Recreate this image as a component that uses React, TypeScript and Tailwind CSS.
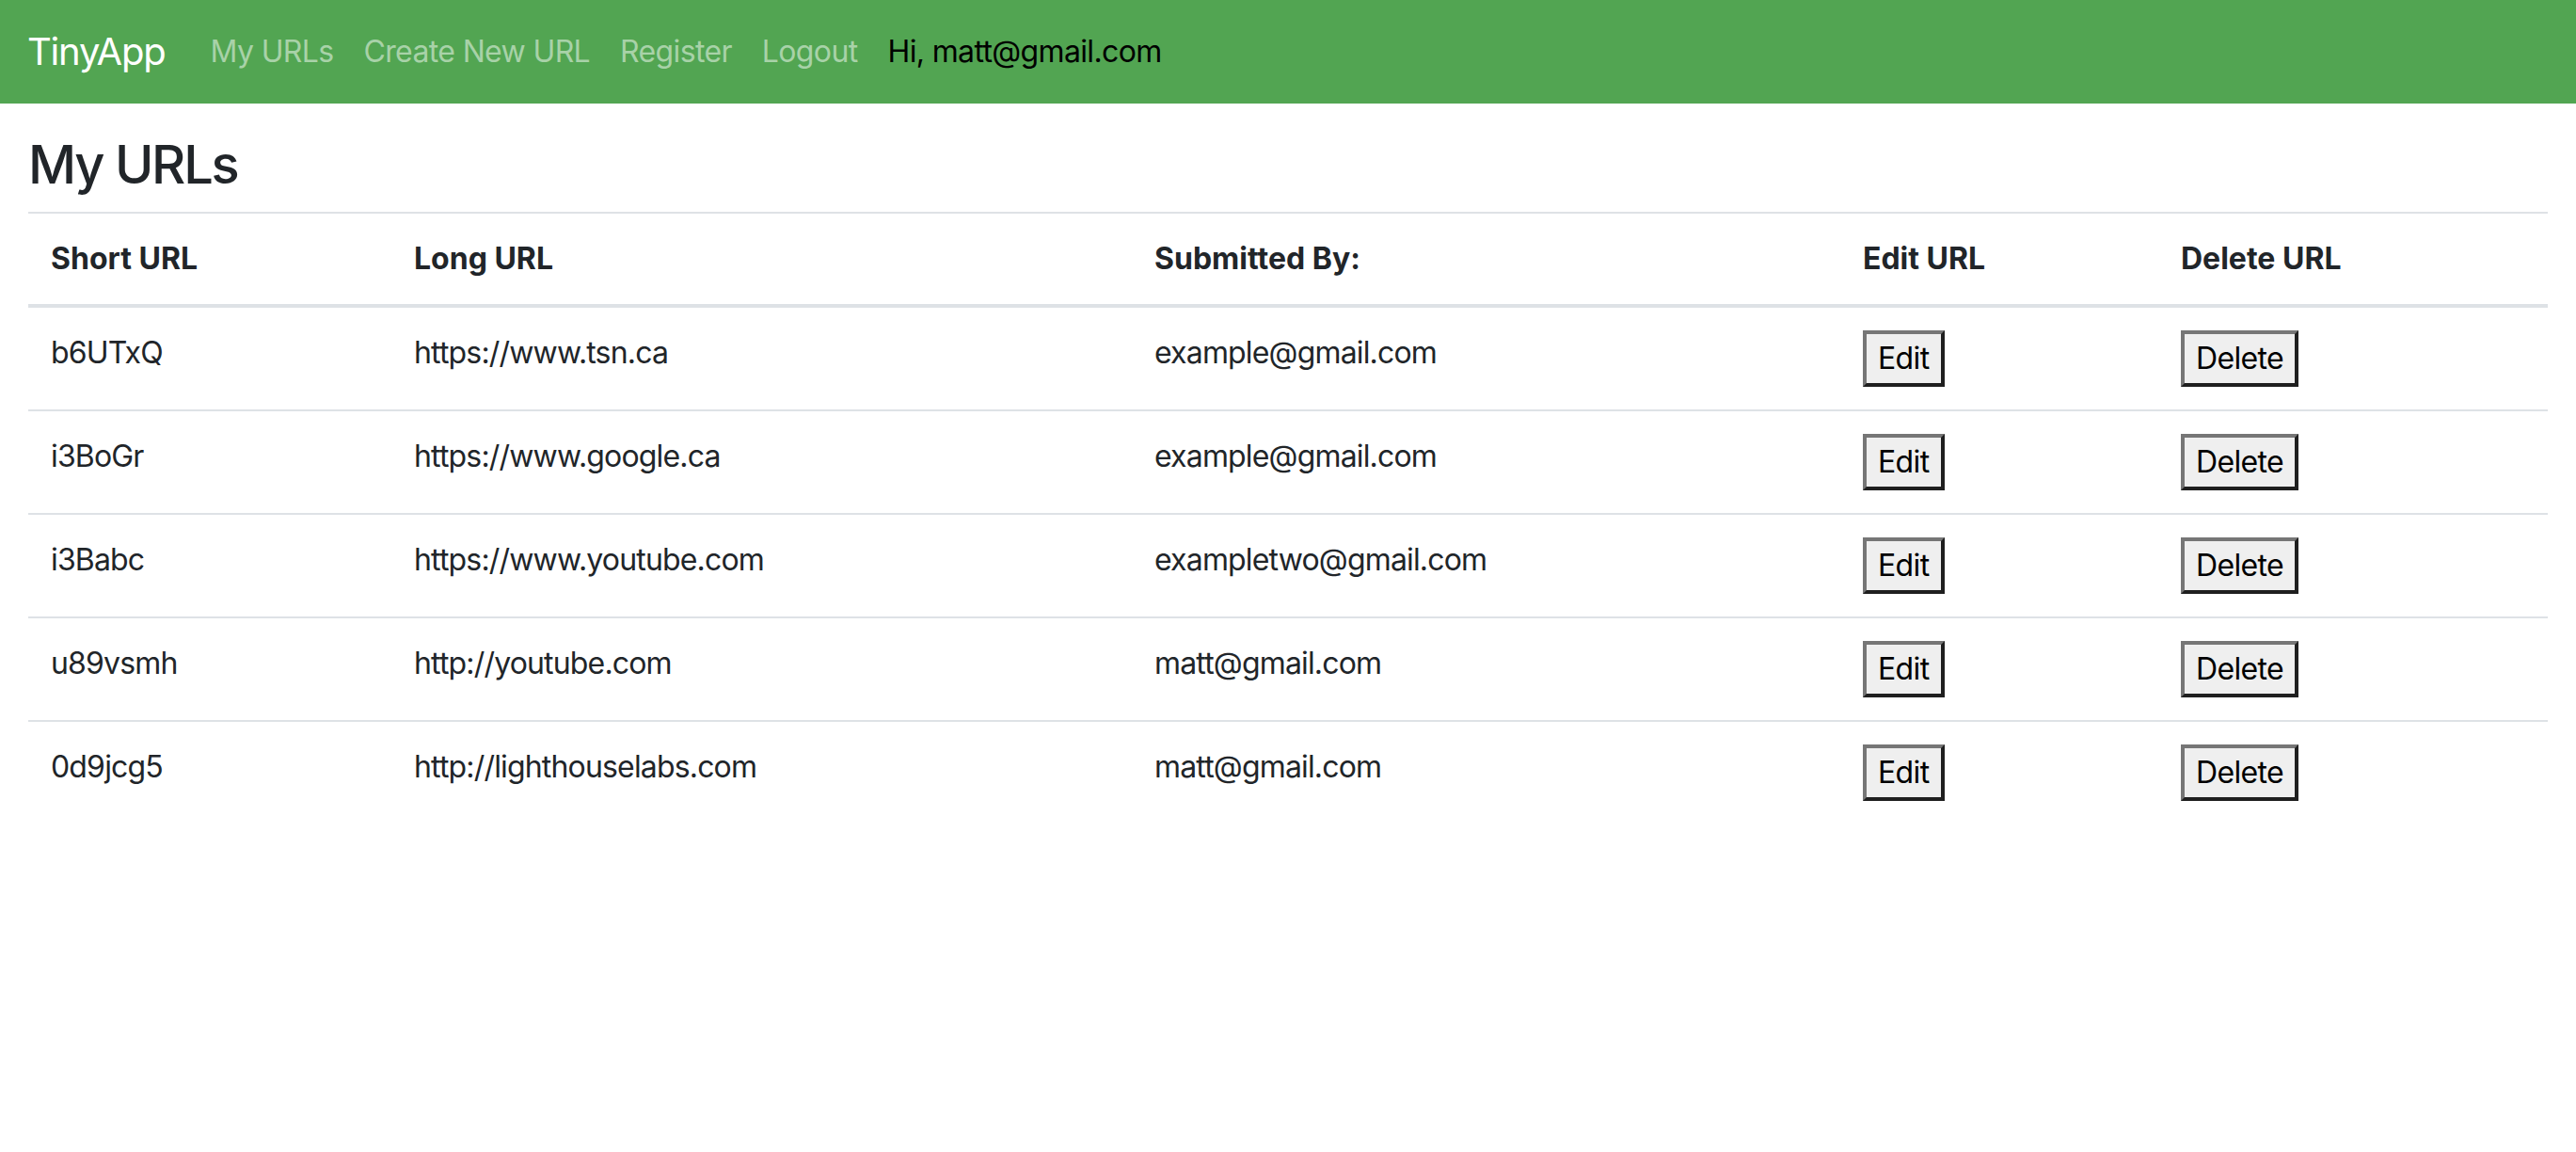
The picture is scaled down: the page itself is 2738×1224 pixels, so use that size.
import React from "react";

type UrlRow = {
  short: string;
  long: string;
  by: string;
};

const rows: UrlRow[] = [
  { short: "b6UTxQ", long: "https://www.tsn.ca", by: "example@gmail.com" },
  { short: "i3BoGr", long: "https://www.google.ca", by: "example@gmail.com" },
  { short: "i3Babc", long: "https://www.youtube.com", by: "exampletwo@gmail.com" },
  { short: "u89vsmh", long: "http://youtube.com", by: "matt@gmail.com" },
  { short: "0d9jcg5", long: "http://lighthouselabs.com", by: "matt@gmail.com" },
];

function OldButton({ label }: { label: string }) {
  return (
    <button
      type="button"
      className="bg-[#efefef] text-black text-[32px] leading-[48px] tracking-[-0.02em] px-[12px] py-[2px] border-[4px] border-solid border-t-[#767676] border-l-[#767676] border-b-[#1f1f1f] border-r-[#1f1f1f] font-['Inter',sans-serif]"
    >
      {label}
    </button>
  );
}

export default function App() {
  return (
    <div className="min-h-screen bg-white text-[#212529] font-['Inter',sans-serif]">
      {/* Navbar */}
      <nav className="flex items-center h-[110px] pl-[29px] pr-[32px] bg-[#52a552] tracking-[-0.04em]">
        <span className="text-white text-[40px] leading-[60px] py-[10px] mr-[32px] tracking-[-0.03em]">
          TinyApp
        </span>
        <a className="px-[16px] py-[16px] text-[32px] leading-[48px] text-[#a8d2a8]">
          My URLs
        </a>
        <a className="px-[16px] py-[16px] text-[32px] leading-[48px] text-[#a8d2a8]">
          Create New URL
        </a>
        <a className="px-[16px] py-[16px] text-[32px] leading-[48px] text-[#a8d2a8]">
          Register
        </a>
        <a className="px-[16px] py-[16px] text-[32px] leading-[48px] text-[#a8d2a8]">
          Logout
        </a>
        <span className="px-[16px] py-[16px] text-[32px] leading-[48px] text-black">
          Hi, matt@gmail.com
        </span>
      </nav>

      <main className="px-[30px]">
        <h3 className="mt-[32px] mb-[16px] text-[56px] leading-[67px] font-medium tracking-[-0.04em]">
          My URLs
        </h3>

        <table className="w-full table-fixed border-collapse text-[32px] leading-[48px] tracking-[-0.026em]">
          <colgroup>
            <col className="w-[386px]" />
            <col className="w-[787px]" />
            <col className="w-[753px]" />
            <col className="w-[338px]" />
            <col />
          </colgroup>
          <thead className="tracking-normal">
            <tr>
              <th className="text-left align-bottom font-bold p-[24px] border-t-[2px] border-b-[4px] border-[#dee2e6]">
                Short URL
              </th>
              <th className="text-left align-bottom font-bold p-[24px] border-t-[2px] border-b-[4px] border-[#dee2e6]">
                Long URL
              </th>
              <th className="text-left align-bottom font-bold p-[24px] border-t-[2px] border-b-[4px] border-[#dee2e6]">
                Submitted By:
              </th>
              <th className="text-left align-bottom font-bold p-[24px] border-t-[2px] border-b-[4px] border-[#dee2e6]">
                Edit URL
              </th>
              <th className="text-left align-bottom font-bold p-[24px] border-t-[2px] border-b-[4px] border-[#dee2e6]">
                Delete URL
              </th>
            </tr>
          </thead>
          <tbody>
            {rows.map((row, i) => (
              <tr key={row.short}>
                <td className={`align-top p-[24px] border-[#dee2e6] ${i === 0 ? "" : "border-t-[2px]"}`}>
                  {row.short}
                </td>
                <td className={`align-top p-[24px] border-[#dee2e6] ${i === 0 ? "" : "border-t-[2px]"}`}>
                  {row.long}
                </td>
                <td className={`align-top p-[24px] border-[#dee2e6] ${i === 0 ? "" : "border-t-[2px]"}`}>
                  {row.by}
                </td>
                <td className={`align-top p-[24px] border-[#dee2e6] ${i === 0 ? "" : "border-t-[2px]"}`}>
                  <OldButton label="Edit" />
                </td>
                <td className={`align-top p-[24px] border-[#dee2e6] ${i === 0 ? "" : "border-t-[2px]"}`}>
                  <OldButton label="Delete" />
                </td>
              </tr>
            ))}
          </tbody>
        </table>
      </main>
    </div>
  );
}
